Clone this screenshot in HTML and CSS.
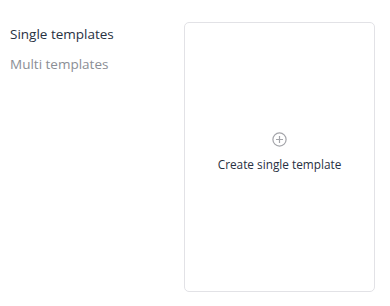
FILE: index.html
```html
<!DOCTYPE html>
<html lang="en">
<head>
  <meta charset="UTF-8">
  <meta name="viewport" content="width=device-width, initial-scale=1.0">
  <title>Templates</title>
  <link rel="stylesheet" href="styles.css">
</head>
<body>
  <div class="page">
    <nav class="menu">
      <a class="menu-item active" href="#">Single templates</a>
      <a class="menu-item" href="#">Multi templates</a>
    </nav>
    <div class="card">
      <button class="create">
        <svg class="plus" width="15" height="15" viewBox="0 0 15 15" fill="none" stroke="#a4a5aa" stroke-width="1.2">
          <circle cx="7.5" cy="7.5" r="6.6"/>
          <path d="M7.5 4v7M4 7.5h7"/>
        </svg>
        <span>Create single template</span>
      </button>
    </div>
  </div>
</body>
</html>
```

FILE: styles.css
```css
body {
  margin: 0;
  padding: 0;
  background-color: #fff;
  font-family: "Open Sans", Lato, sans-serif;
  color: #283142;
}
.page {
  display: flex;
  padding: 22px 15px 14px 10px;
}
.menu {
  width: 174px;
  display: flex;
  flex-direction: column;
  gap: 11px;
  padding-top: 3px;
}
.menu-item {
  font-size: 13.5px;
  line-height: 19px;
  color: #8b8e95;
  text-decoration: none;
}
.menu-item.active {
  color: #283142;
}
.card {
  flex: 1;
  height: 268px;
  border: 1px solid #e2e2e6;
  border-radius: 5px;
  display: flex;
  align-items: center;
  justify-content: center;
}
.create {
  background: none;
  border: none;
  padding: 0;
  margin-top: -10px;
  display: flex;
  flex-direction: column;
  align-items: center;
  gap: 9px;
  font-family: inherit;
  font-size: 11.8px;
  color: #283142;
  cursor: pointer;
}
.plus {
  display: block;
}
```
